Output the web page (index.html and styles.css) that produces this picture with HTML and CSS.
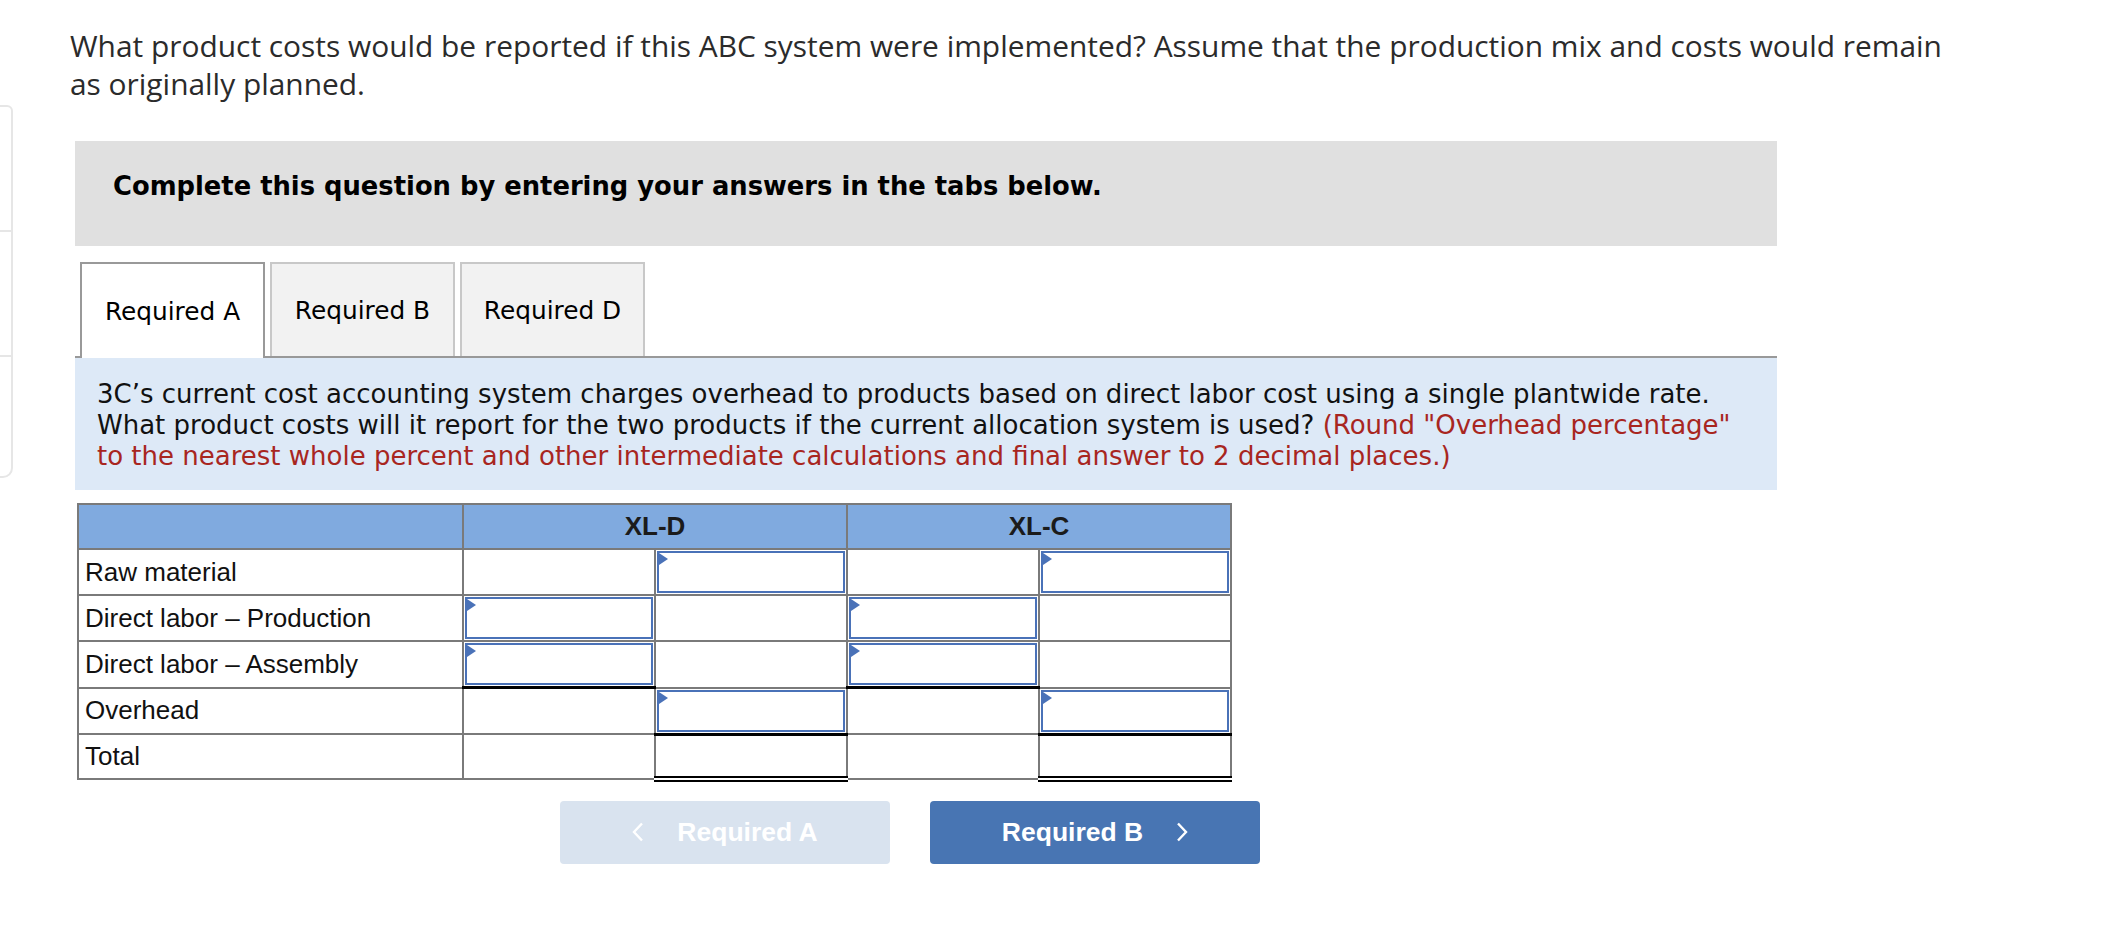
FILE: index.html
```html
<!DOCTYPE html>
<html lang="en">
<head>
<meta charset="utf-8">
<title>Required A</title>
<link rel="stylesheet" href="styles.css">
</head>
<body>
<div class="sidenav">
  <div class="sn-item"></div>
  <div class="sn-item"></div>
  <div class="sn-item"></div>
</div>
<main class="page">
  <p class="question">What product costs would be reported if this ABC system were implemented? Assume that the production mix and costs would remain<br>as originally planned.</p>

  <div class="notice">Complete this question by entering your answers in the tabs below.</div>

  <div class="tabs">
    <div class="tab active">Required A</div>
    <div class="tab">Required B</div>
    <div class="tab">Required D</div>
  </div>

  <div class="instructions">3C’s current cost accounting system charges overhead to products based on direct labor cost using a single plantwide rate.<br>What product costs will it report for the two products if the current allocation system is used? <span class="hint">(Round "Overhead percentage"<br>to the nearest whole percent and other intermediate calculations and final answer to 2 decimal places.)</span></div>

  <table class="grid">
    <colgroup>
      <col class="c-label"><col class="c-val"><col class="c-val"><col class="c-val"><col class="c-val">
    </colgroup>
    <thead>
      <tr><th></th><th colspan="2">XL-D</th><th colspan="2">XL-C</th></tr>
    </thead>
    <tbody>
      <tr>
        <td class="label">Raw material</td>
        <td></td>
        <td class="in"><div class="field"></div></td>
        <td></td>
        <td class="in"><div class="field"></div></td>
      </tr>
      <tr>
        <td class="label">Direct labor – Production</td>
        <td class="in"><div class="field"></div></td>
        <td></td>
        <td class="in"><div class="field"></div></td>
        <td></td>
      </tr>
      <tr>
        <td class="label">Direct labor – Assembly</td>
        <td class="in"><div class="field"></div></td>
        <td></td>
        <td class="in"><div class="field"></div></td>
        <td></td>
      </tr>
      <tr class="sub-row">
        <td class="label">Overhead</td>
        <td class="sum"></td>
        <td class="in"><div class="field"></div></td>
        <td class="sum"></td>
        <td class="in"><div class="field"></div></td>
      </tr>
      <tr class="total-row">
        <td class="label">Total</td>
        <td></td>
        <td class="grand"></td>
        <td></td>
        <td class="grand"></td>
      </tr>
    </tbody>
  </table>

  <div class="nav">
    <button class="btn prev" type="button" disabled>
      <svg class="chev" width="12" height="20" viewBox="0 0 12 20"><polyline points="10,1.5 2,10 10,18.5" fill="none" stroke="#fff" stroke-width="2.4"/></svg>
      <span>Required A</span>
    </button>
    <button class="btn next" type="button">
      <span>Required B</span>
      <svg class="chev" width="12" height="20" viewBox="0 0 12 20"><polyline points="2,1.5 10,10 2,18.5" fill="none" stroke="#fff" stroke-width="2.4"/></svg>
    </button>
  </div>
</main>
</body>
</html>
```

FILE: styles.css
```css
html, body {
  margin: 0;
  padding: 0;
  background: #fff;
}

body {
  font-family: "Liberation Sans", Arial, sans-serif;
  color: #222;
  position: relative;
  min-height: 952px;
}

.sidenav {
  position: absolute;
  left: -20px;
  top: 105px;
  width: 33px;
  height: 373px;
  box-sizing: border-box;
  border: 2px solid #e6e6e6;
  border-radius: 0 6px 10px 0;
  display: flex;
  flex-direction: column;
}

.sn-item {
  height: 123px;
  border-bottom: 2px solid #e6e6e6;
}

.sn-item:last-child {
  border-bottom: 0;
  flex: 1;
}

.page {
  padding: 27px 0 0 75px;
  width: 1702px;
}

.question {
  margin: 0 0 0 -5px;
  width: 1980px;
  font-family: "Open Sans", Lato, sans-serif;
  font-size: 29.9px;
  line-height: 38px;
  color: #2b2b2b;
}

.notice {
  margin-top: 38px;
  background: #e0e0e0;
  padding: 30px 38px 45px;
  font-family: "DejaVu Sans", Verdana, sans-serif;
  font-weight: bold;
  font-size: 25.8px;
  line-height: 30px;
  color: #000;
}

.tabs {
  display: flex;
  gap: 5px;
  margin: 16px 0 0 5px;
  height: 94px;
}

.tab {
  width: 185px;
  height: 94px;
  box-sizing: border-box;
  border: 2px solid #c8c8c8;
  border-bottom: 0;
  background: #f2f2f2;
  display: flex;
  align-items: center;
  justify-content: center;
  font-family: "DejaVu Sans", Verdana, sans-serif;
  font-size: 24.8px;
  color: #000;
}

.tab.active {
  background: #fff;
  border-color: #999;
  height: 96px;
  position: relative;
  z-index: 1;
}

.instructions {
  border-top: 2px solid #999;
  background: #dde9f7;
  padding: 21px 22px 18px;
  font-family: "DejaVu Sans", Verdana, sans-serif;
  font-size: 26px;
  line-height: 31px;
  color: #111;
}

.hint {
  color: #a8261f;
}

.grid {
  border-collapse: collapse;
  table-layout: fixed;
  width: 1154px;
  margin: 13px 0 0 2px;
  font-family: "Liberation Sans", Arial, sans-serif;
  font-size: 26px;
  color: #111;
}

.c-label { width: 385px; }
.c-val { width: 192px; }

.grid th,
.grid td {
  border: 2px solid #7a7a7a;
  padding: 0;
}

.grid th {
  background: #80aadf;
  height: 43px;
  font-weight: bold;
  color: #1b1b1b;
  text-align: center;
}

.grid td {
  height: 44px;
  background: #fff;
}

.grid .sub-row td {
  height: 43px;
}

.grid .total-row td {
  height: 40px;
}

.grid td.label {
  padding-left: 6px;
  text-align: left;
}

.field {
  position: relative;
  box-sizing: border-box;
  height: 42px;
  margin: 1px 1px;
  border: 2px solid #4a72b8;
}

.field::before {
  content: "";
  position: absolute;
  left: 0;
  top: 0;
  border-left: 9px solid #4a72b8;
  border-top: 6px solid transparent;
  border-bottom: 6px solid transparent;
}

.grid td.sum {
  border-top: 3px solid #000;
}

.grid td.grand {
  border-top: 3px solid #000;
  border-bottom: 6px double #000;
}

.nav {
  display: flex;
  gap: 40px;
  margin: 19px 0 0 485px;
}

.btn {
  width: 330px;
  height: 63px;
  border: 0;
  border-radius: 4px;
  display: flex;
  align-items: center;
  justify-content: center;
  gap: 33px;
  font-family: "Liberation Sans", Arial, sans-serif;
  font-weight: bold;
  font-size: 26.5px;
  color: #fff;
  padding: 0;
}

.btn.prev {
  background: #d9e3ef;
}

.btn.next {
  background: #4875b3;
}

.chev {
  display: block;
}
```
